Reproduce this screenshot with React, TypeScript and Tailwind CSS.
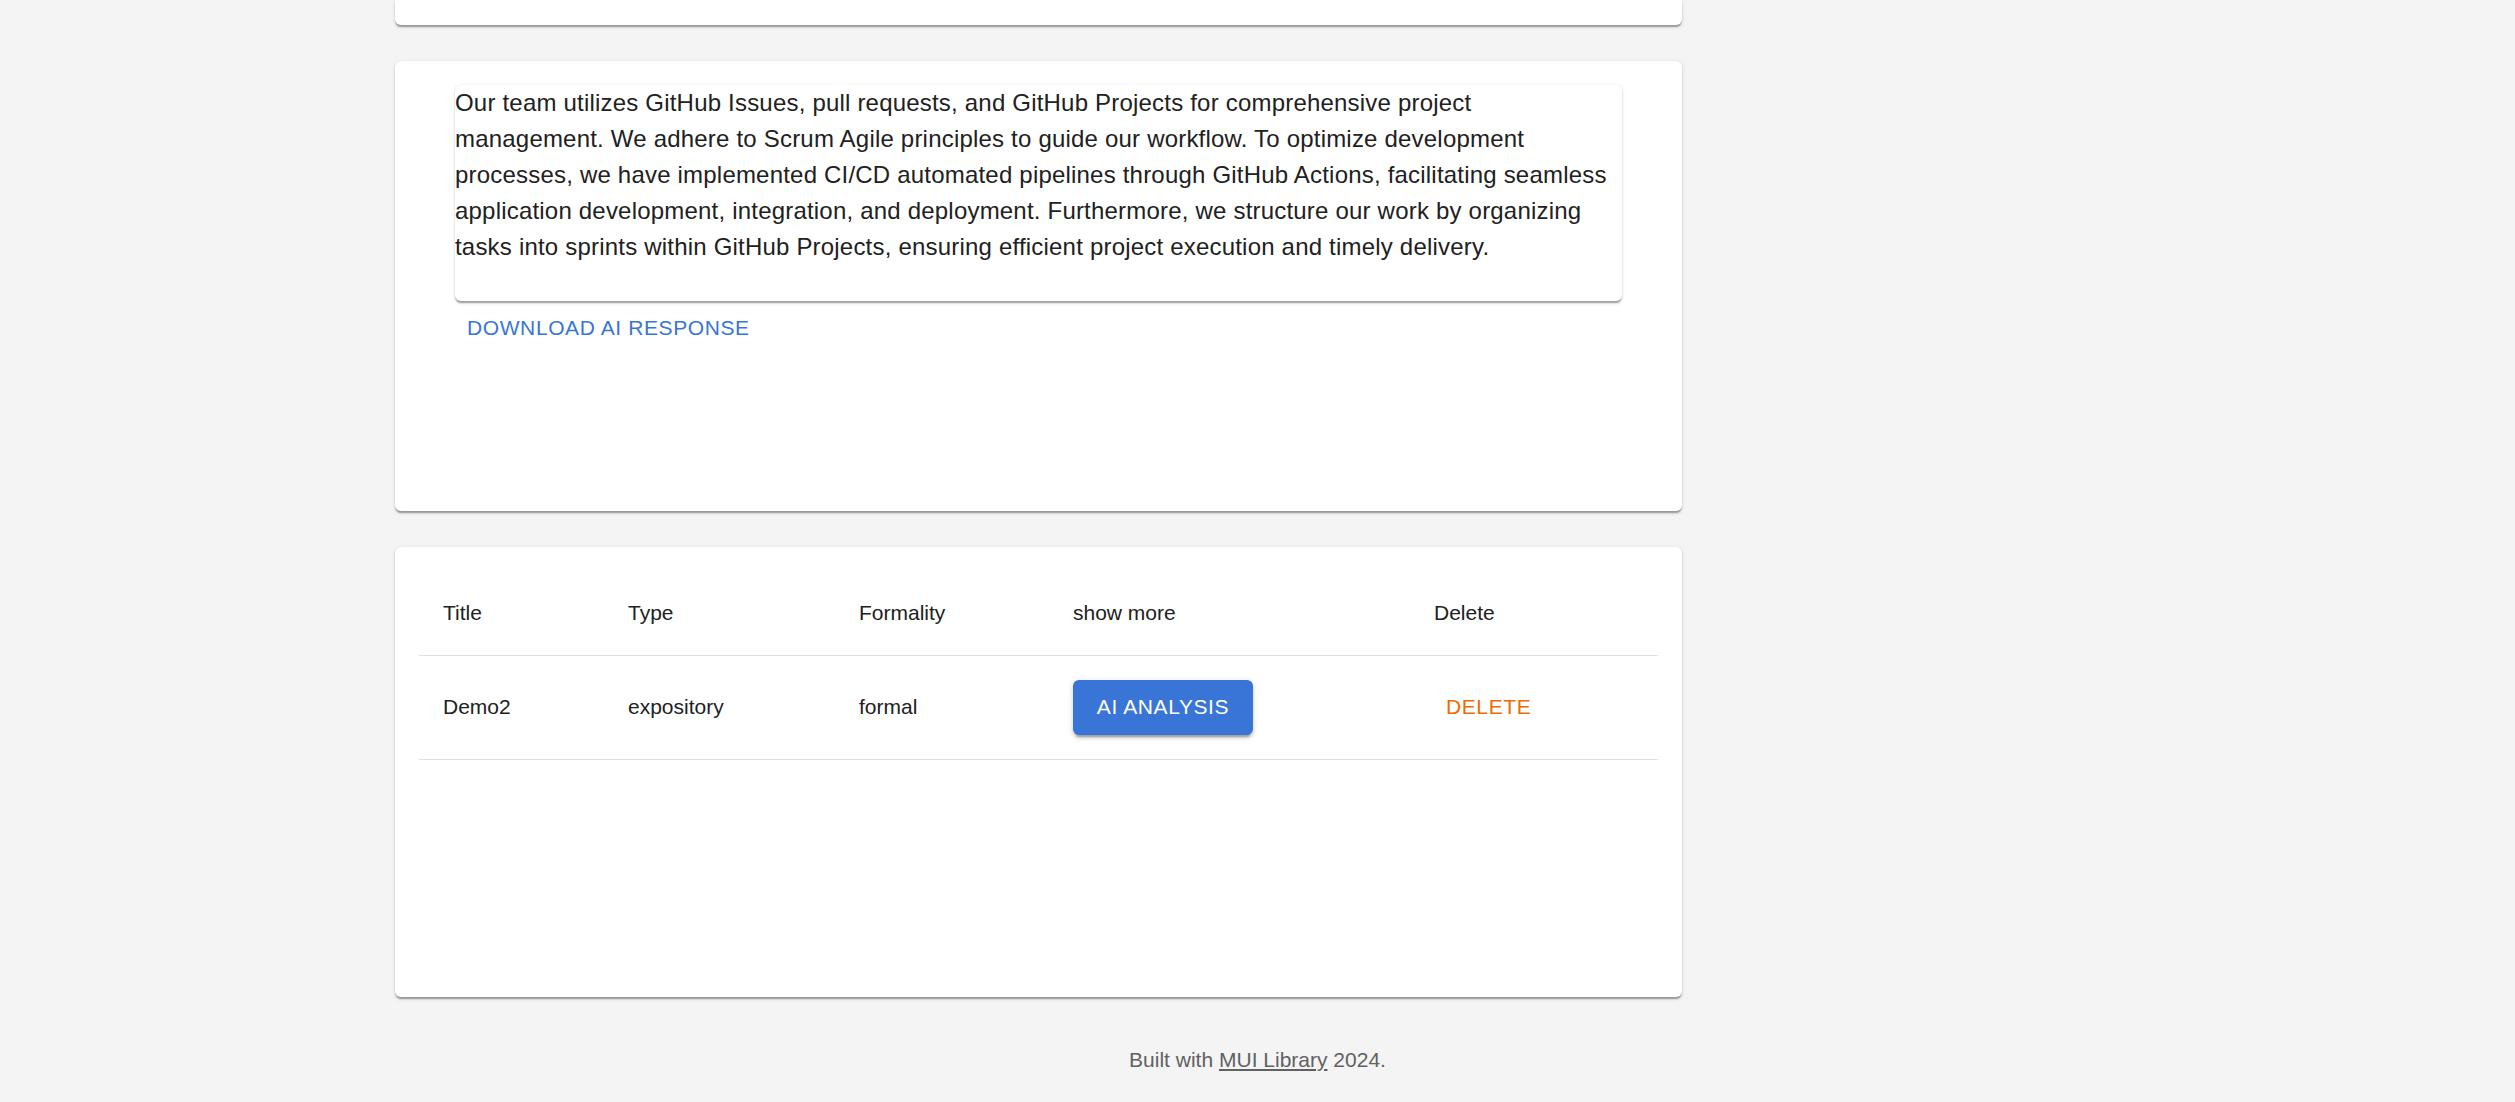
import React from "react";

const cardShadow =
  "shadow-[0_3px_1.5px_-1.5px_rgba(0,0,0,0.2),0_1.5px_1.5px_0_rgba(0,0,0,0.14),0_1.5px_4.5px_0_rgba(0,0,0,0.12)]";

const rows = [{ id: 1, title: "Demo2", type: "expository", formality: "formal" }];

const App: React.FC = () => {
  return (
    <div className="min-h-screen w-full bg-[#f4f4f4] font-['Liberation_Sans',Arial,sans-serif] text-[#212121]">
      <div className="w-[1287px] ml-[395px] flex flex-col gap-[36px]">
        {/* bottom of the card above, scrolled off */}
        <div className={`h-[25px] bg-white rounded-b-[6px] ${cardShadow}`} />

        <div className={`h-[450px] bg-white rounded-[6px] px-[60px] pt-[24px] ${cardShadow}`}>
          <div className={`bg-white rounded-[6px] pb-[36px] text-[24px] leading-[36px] tracking-[0.2px] ${cardShadow}`}>
            Our team utilizes GitHub Issues, pull requests, and GitHub Projects for comprehensive project
            management. We adhere to Scrum Agile principles to guide our workflow. To optimize development
            processes, we have implemented CI/CD automated pipelines through GitHub Actions, facilitating
            seamless application development, integration, and deployment. Furthermore, we structure our
            work by organizing tasks into sprints within GitHub Projects, ensuring efficient project
            execution and timely delivery.
          </div>
          <button className="h-[54px] px-[12px] text-[21px] tracking-[0.6px] uppercase text-[#3875d7] rounded-[6px]">
            Download AI Response
          </button>
        </div>

        <div className={`h-[450px] bg-white rounded-[6px] p-[24px] ${cardShadow}`}>
          <table className="w-full text-[21px] text-left border-collapse">
            <thead>
              <tr className="border-b-[1.5px] border-[#e0e0e0]">
                <th className="w-[185px] h-[84px] px-[24px] font-normal">Title</th>
                <th className="w-[231px] px-[24px] font-normal">Type</th>
                <th className="w-[214px] px-[24px] font-normal">Formality</th>
                <th className="w-[361px] px-[24px] font-normal">show more</th>
                <th className="px-[24px] font-normal">Delete</th>
              </tr>
            </thead>
            <tbody>
              {rows.map((row) => (
                <tr key={row.id} className="border-b-[1.5px] border-[#e0e0e0]">
                  <td className="h-[104px] px-[24px]">{row.title}</td>
                  <td className="px-[24px]">{row.type}</td>
                  <td className="px-[24px]">{row.formality}</td>
                  <td className="px-[24px]">
                    <button className="h-[55px] w-[180px] rounded-[6px] bg-[#3875d7] text-white uppercase tracking-[0.6px] shadow-[0_4.5px_1.5px_-3px_rgba(0,0,0,0.2),0_3px_3px_0_rgba(0,0,0,0.14),0_1.5px_7.5px_0_rgba(0,0,0,0.12)]">
                      AI Analysis
                    </button>
                  </td>
                  <td className="px-[24px]">
                    <button className="h-[54px] px-[12px] uppercase tracking-[0.6px] text-[#ed6c02] rounded-[6px]">
                      Delete
                    </button>
                  </td>
                </tr>
              ))}
            </tbody>
          </table>
        </div>
      </div>

      <p className="mt-[48px] pb-[40px] text-center text-[21px] leading-[30px] text-[#616161]">
        Built with{" "}
        <a href="#" className="underline text-[#616161]">
          MUI Library
        </a>{" "}
        2024.
      </p>
    </div>
  );
};

export default App;
